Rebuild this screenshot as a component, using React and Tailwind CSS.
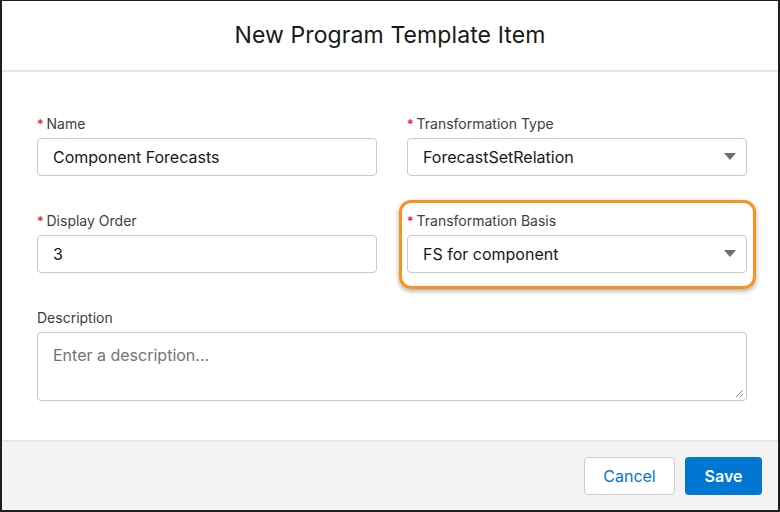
import React from 'react'

const font = { fontFamily: 'Inter, "Liberation Sans", Arial, sans-serif' }

function Label({ text, required }) {
  return (
    <div className="flex items-center h-[18px] text-[14px] leading-[18px] text-[#3e3e3c]">
      {required && <span className="text-[#ea001e] mr-[3px] text-[13px]">*</span>}
      <span>{text}</span>
    </div>
  )
}

function TextInput({ value }) {
  return (
    <div className="mt-[5px] h-[38px] border border-[#c9c9c9] rounded-[4px] bg-white flex items-center px-[15px] text-[16px] text-[#181818]">
      {value}
    </div>
  )
}

function Combo({ value }) {
  return (
    <div className="mt-[5px] h-[38px] border border-[#c9c9c9] rounded-[4px] bg-white flex items-center justify-between pl-[15px] pr-[10px] text-[16px] text-[#181818]">
      <span>{value}</span>
      <svg width="12" height="8" viewBox="0 0 12 8">
        <path d="M0 0 L12 0 L6 7 Z" fill="#706e6b" />
      </svg>
    </div>
  )
}

export default function App() {
  return (
    <div className="w-[780px] h-[512px] bg-[#1e1e1e]" style={font}>
      <div className="w-full h-full border-l-[2px] border-r-[2px] border-t border-b-[2px] border-[#1e1e1e] bg-white flex flex-col overflow-hidden rounded-[2px]">
        <div className="h-[71px] flex items-center justify-center border-b-[2px] border-[#e5e5e5] shrink-0">
          <h1 className="text-[23px] text-[#181818] font-normal tracking-[0.1px]">New Program Template Item</h1>
        </div>

        <div className="flex-1 pl-[35px] pr-[31px] pt-[43px]">
          <div className="grid grid-cols-2 gap-x-[30px] gap-y-[36px]">
            <div>
              <Label text="Name" required />
              <TextInput value="Component Forecasts" />
            </div>
            <div>
              <Label text="Transformation Type" required />
              <Combo value="ForecastSetRelation" />
            </div>
            <div>
              <Label text="Display Order" required />
              <TextInput value="3" />
            </div>
            <div className="relative">
              <div className="absolute -left-[8px] -right-[9px] -top-[12px] -bottom-[16px] border-[3px] border-[#f7931e] rounded-[12px] shadow-[0_2px_5px_rgba(0,0,0,0.35)] pointer-events-none" />
              <Label text="Transformation Basis" required />
              <Combo value="FS for component" />
            </div>
          </div>

          <div className="mt-[36px]">
            <Label text="Description" />
            <div className="relative mt-[5px] h-[69px] border border-[#c9c9c9] rounded-[4px] bg-white px-[15px] pt-[10px] text-[16px] text-[#747474]">
              Enter a description...
              <svg className="absolute right-[2px] bottom-[2px]" width="9" height="9" viewBox="0 0 9 9">
                <path d="M8 1 L1 8 M8 5 L5 8" stroke="#8a8a8a" strokeWidth="1" />
              </svg>
            </div>
          </div>
        </div>

        <div className="h-[70px] shrink-0 bg-[#f3f3f3] border-t-[2px] border-[#e5e5e5] flex items-center justify-end gap-[10px] pr-[16px]">
          <button className="h-[38px] w-[91px] rounded-[4px] border border-[#c9c9c9] bg-white text-[16px] text-[#0176d3]">
            Cancel
          </button>
          <button className="h-[38px] w-[77px] rounded-[4px] bg-[#0176d3] text-[16px] font-semibold text-white">
            Save
          </button>
        </div>
      </div>
    </div>
  )
}
